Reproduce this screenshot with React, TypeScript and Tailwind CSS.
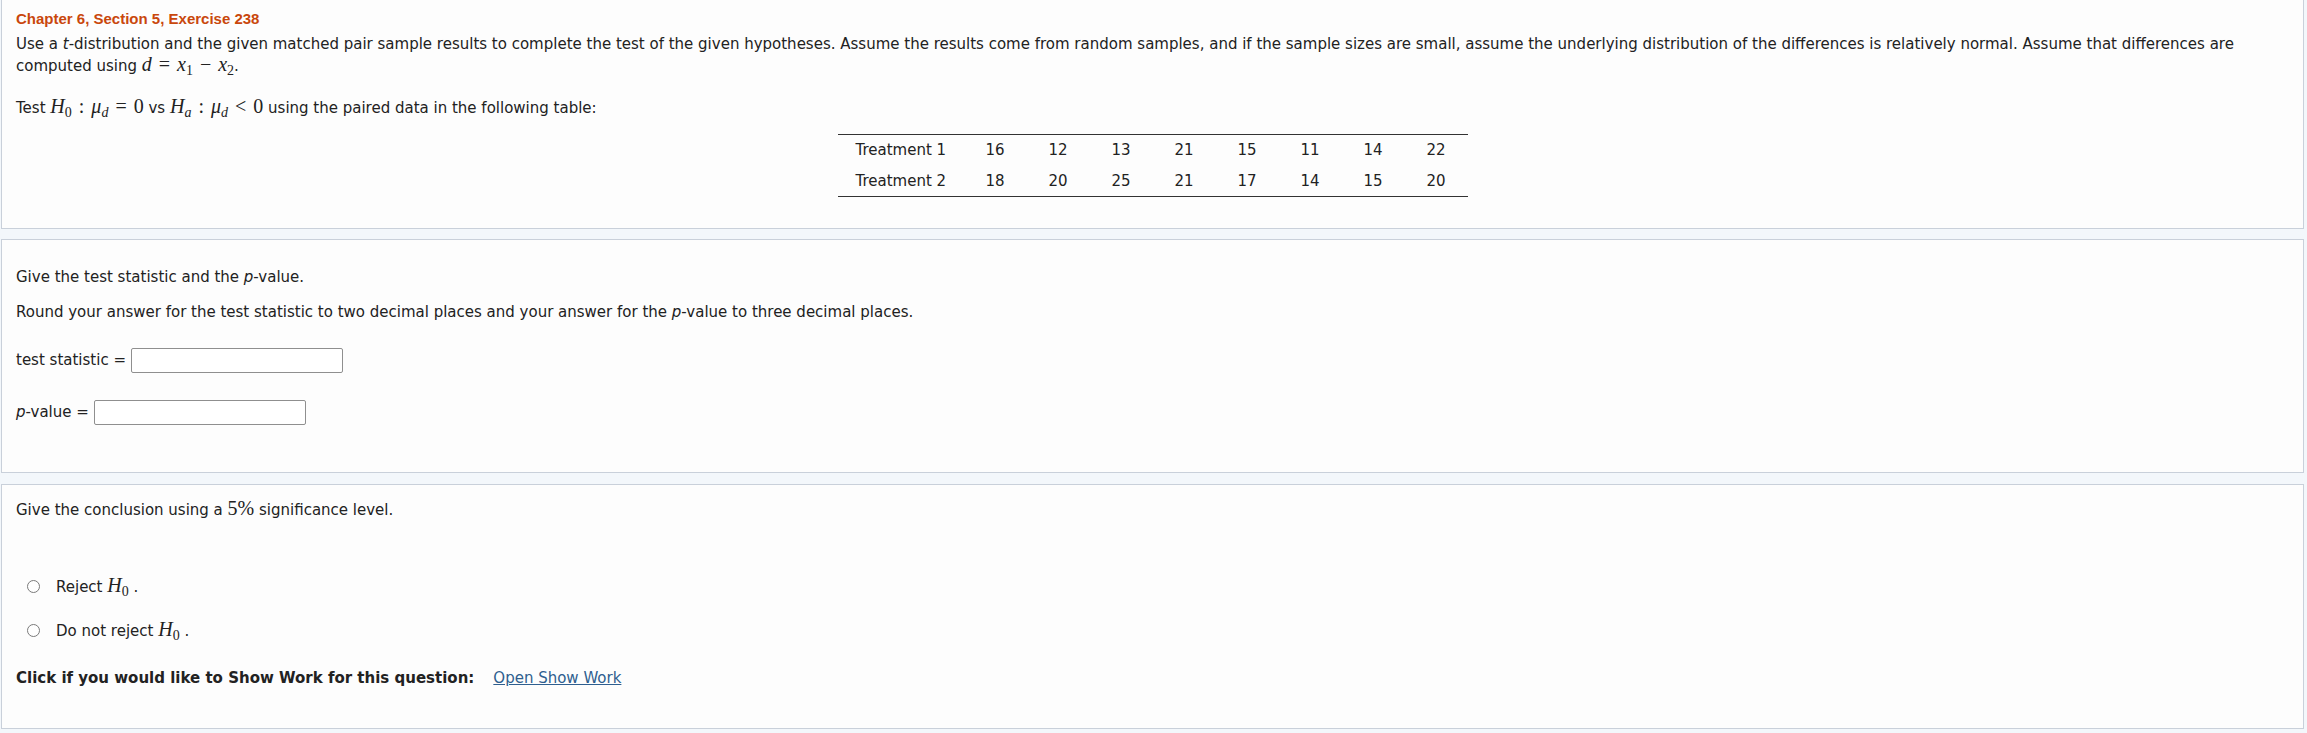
import React from 'react';

const rows = [
  { label: 'Treatment 1', values: [16, 12, 13, 21, 15, 11, 14, 22] },
  { label: 'Treatment 2', values: [18, 20, 25, 21, 17, 14, 15, 20] },
];

// MathJax-looking inline math
function M({ children }: { children: React.ReactNode }) {
  return <span className="font-['Liberation_Serif',serif] text-[20px]">{children}</span>;
}

function I({ children }: { children: React.ReactNode }) {
  return <span className="italic">{children}</span>;
}

function Op({ children }: { children: React.ReactNode }) {
  return <span className="mx-[7px]">{children}</span>;
}

function Sub({ children, italic }: { children: React.ReactNode; italic?: boolean }) {
  return <sub className={italic ? 'text-[14px] italic' : 'text-[14px]'}>{children}</sub>;
}

function Radio({ children }: { children: React.ReactNode }) {
  return (
    <label className="flex items-center leading-[20px] ml-[11px]">
      <span className="w-[13px] h-[13px] rounded-full border border-[#7a7a7a] bg-white shrink-0" />
      <span className="ml-[16px]">{children}</span>
    </label>
  );
}

export default function App() {
  return (
    <div className="min-h-screen bg-[#f3f7fb] pl-[1px] pr-[3px] font-['DejaVu_Sans','Noto_Sans',sans-serif] text-[15px] text-[#222]">
      {/* Question header */}
      <section className="h-[229px] border border-t-0 border-[#c9d0da] bg-[#fdfdfd] px-[14px] pt-[9px]">
        <h1 className="font-['Liberation_Sans',sans-serif] text-[15px] font-bold leading-[20px] text-[#c9470c]">
          Chapter 6, Section 5, Exercise 238
        </h1>
        <p className="mt-[5px] leading-[20px]">
          Use a <I>t</I>-distribution and the given matched pair sample results to complete the test of the given
          hypotheses. Assume the results come from random samples, and if the sample sizes are small, assume the
          underlying distribution of the differences is relatively normal. Assume that differences are computed
          using{' '}
          <M>
            <I>d</I>
            <Op>=</Op>
            <I>x</I>
            <Sub>1</Sub>
            <Op>−</Op>
            <I>x</I>
            <Sub>2</Sub>
          </M>
          .
        </p>
        <p className="mt-[20px] leading-[20px]">
          Test{' '}
          <M>
            <I>H</I>
            <Sub>0</Sub>
            <Op>:</Op>
            <I>μ</I>
            <Sub italic>d</Sub>
            <Op>=</Op>0
          </M>{' '}
          vs{' '}
          <M>
            <I>H</I>
            <Sub italic>a</Sub>
            <Op>:</Op>
            <I>μ</I>
            <Sub italic>d</Sub>
            <Op>&lt;</Op>0
          </M>{' '}
          using the paired data in the following table:
        </p>
        <table className="mt-[16px] mx-auto border-y border-[#333]">
          <tbody>
            {rows.map(row => (
              <tr key={row.label} className="h-[31px]">
                <td className="w-[126px] pl-[18px]">{row.label}</td>
                {row.values.map((v, i) => (
                  <td key={i} className="w-[63px] text-center">
                    {v}
                  </td>
                ))}
              </tr>
            ))}
          </tbody>
        </table>
      </section>

      {/* Test statistic and p-value */}
      <section className="mt-[10px] h-[234px] border border-[#c9d0da] bg-[#fdfdfd] px-[14px] pt-[27px]">
        <p className="leading-[20px]">
          Give the test statistic and the <I>p</I>-value.
        </p>
        <p className="mt-[15px] leading-[20px]">
          Round your answer for the test statistic to two decimal places and your answer for the <I>p</I>-value to
          three decimal places.
        </p>
        <div className="mt-[26px] flex items-center">
          <span>test statistic =</span>
          <input
            type="text"
            className="ml-[5px] w-[212px] h-[25px] border border-[#8f8f8f] rounded-[2px] bg-white px-1 outline-none"
          />
        </div>
        <div className="mt-[27px] flex items-center">
          <span>
            <I>p</I>-value =
          </span>
          <input
            type="text"
            className="ml-[5px] w-[212px] h-[25px] border border-[#8f8f8f] rounded-[2px] bg-white px-1 outline-none"
          />
        </div>
      </section>

      {/* Conclusion */}
      <section className="mt-[11px] h-[245px] border border-[#c9d0da] bg-[#fdfdfd] px-[14px] pt-[13px]">
        <p className="leading-[20px]">
          Give the conclusion using a <M>5%</M> significance level.
        </p>
        <div className="mt-[55px]">
          <Radio>
            Reject{' '}
            <M>
              <I>H</I>
              <Sub>0</Sub>
            </M>{' '}
            .
          </Radio>
        </div>
        <div className="mt-[22px]">
          <Radio>
            Do not reject{' '}
            <M>
              <I>H</I>
              <Sub>0</Sub>
            </M>{' '}
            .
          </Radio>
        </div>
        <div className="mt-[27px] leading-[20px]">
          <span className="font-bold">Click if you would like to Show Work for this question:</span>
          <a href="#" className="ml-[19px] text-[#2f5f8f] underline">
            Open Show Work
          </a>
        </div>
      </section>
    </div>
  );
}
